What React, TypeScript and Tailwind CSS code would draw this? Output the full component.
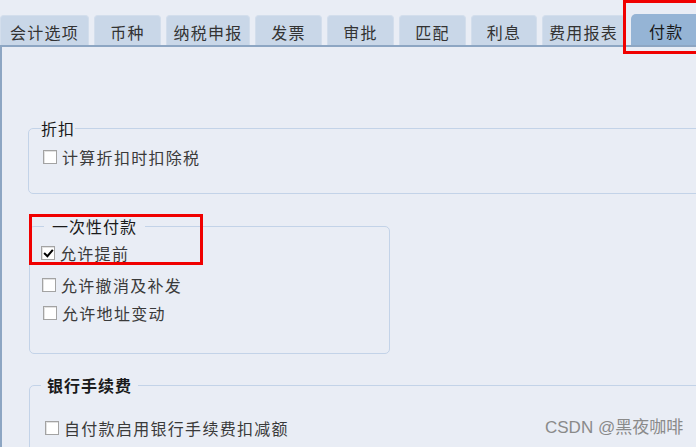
import React from "react";

function Box({ checked = false }: { checked?: boolean }) {
  return (
    <span className="flex h-[14px] w-[14px] shrink-0 items-center justify-center border border-[#a3a3a3] bg-white shadow-[inset_1px_1px_0_#e2e2e2]">
      {checked && (
        <svg viewBox="0 0 12 12" className="h-[11px] w-[11px]">
          <path d="M2 6.2 L4.8 9 L10 2.8" fill="none" stroke="#000" strokeWidth="2.2" strokeLinecap="square" />
        </svg>
      )}
    </span>
  );
}

function Row({ label, checked = false, className = "" }: { label: string; checked?: boolean; className?: string }) {
  return (
    <div className={"flex h-[20px] items-center gap-[5px] " + className}>
      <Box checked={checked} />
      <span className="text-[16px] leading-[20px] tracking-[1.3px] text-[#3a3a3a]">{label}</span>
    </div>
  );
}

const tabs: { label: string; w: string; active?: boolean }[] = [
  { label: "会计选项", w: "w-[89px]" },
  { label: "币种", w: "w-[67px]" },
  { label: "纳税申报", w: "w-[84px]" },
  { label: "发票", w: "w-[67px]" },
  { label: "审批", w: "w-[67px]" },
  { label: "匹配", w: "w-[67px]" },
  { label: "利息", w: "w-[66px]" },
  { label: "费用报表", w: "w-[83px]" },
  { label: "付款", w: "w-[80px]", active: true },
];

export default function App() {
  return (
    <div className="relative h-[447px] w-[696px] overflow-hidden bg-[#e9edf5] font-['Noto_Sans_CJK_SC','Liberation_Sans',sans-serif]">
      <div className="flex h-[45px] items-end gap-[5px]">
        {tabs.map((t) =>
          t.active ? (
            <div
              key={t.label}
              className={`${t.w} ml-[1px] flex h-[31px] shrink-0 items-center justify-start rounded-t-[5px] bg-[#95b4d5] pl-[18px] pt-[3px] text-[16px] tracking-[1.3px] text-[#1a1a1a]`}
            >
              {t.label}
            </div>
          ) : (
            <div
              key={t.label}
              className={`${t.w} flex h-[30px] shrink-0 items-center justify-center rounded-t-[4px] border border-b-0 border-[#d3deec] bg-[#c9d7e8] pt-[3px] text-[16px] tracking-[1.3px] text-[#333333]`}
            >
              {t.label}
            </div>
          )
        )}
      </div>

      <div className="h-[402px] border-l-2 border-t-2 border-[#8da6c3]">
        <fieldset className="ml-[26px] mt-[71px] w-[700px] rounded-[5px] border border-[#c3d3e8]">
          <legend className="ml-[12px] text-[16px] leading-[20px] tracking-[1px] text-[#1a1a1a]">折扣</legend>
          <div className="pb-[26px] pl-[14px] pt-[9px]">
            <Row label="计算折扣时扣除税" />
          </div>
        </fieldset>

        <fieldset className="ml-[27px] mt-[22px] w-[361px] rounded-[5px] border border-[#c3d3e8]">
          <legend className="ml-[14px] px-[8px] text-[16px] leading-[20px] tracking-[1px] text-[#1a1a1a]">一次性付款</legend>
          <div className="flex flex-col pb-[30px] pl-[11px] pt-[7px]">
            <Row label="允许提前" checked />
            <Row label="允许撤消及补发" className="mt-[12px] ml-[1px]" />
            <Row label="允许地址变动" className="mt-[8px] ml-[2px]" />
          </div>
        </fieldset>

        <fieldset className="ml-[27px] mt-[21px] w-[700px] rounded-[5px] border border-[#c3d3e8]">
          <legend className="ml-[11px] px-[6px] text-[16px] font-bold leading-[20px] tracking-[1px] text-[#1a1a1a]">银行手续费</legend>
          <div className="pb-[30px] pl-[15px] pt-[23px]">
            <Row label="自付款启用银行手续费扣减额" />
          </div>
        </fieldset>
      </div>

      <div className="pointer-events-none absolute left-[623px] top-0 h-[54px] w-[80px] border-[3px] border-[#f00000]" />
      <div className="pointer-events-none absolute left-[29px] top-[214px] h-[51px] w-[174px] border-[3px] border-[#f00000]" />

      <div className="absolute left-[545px] top-[416px] font-['Liberation_Sans','Noto_Sans_CJK_SC',sans-serif] text-[17px] leading-[24px] text-[#8a8a8a]">
        CSDN @黑夜咖啡
      </div>
    </div>
  );
}
